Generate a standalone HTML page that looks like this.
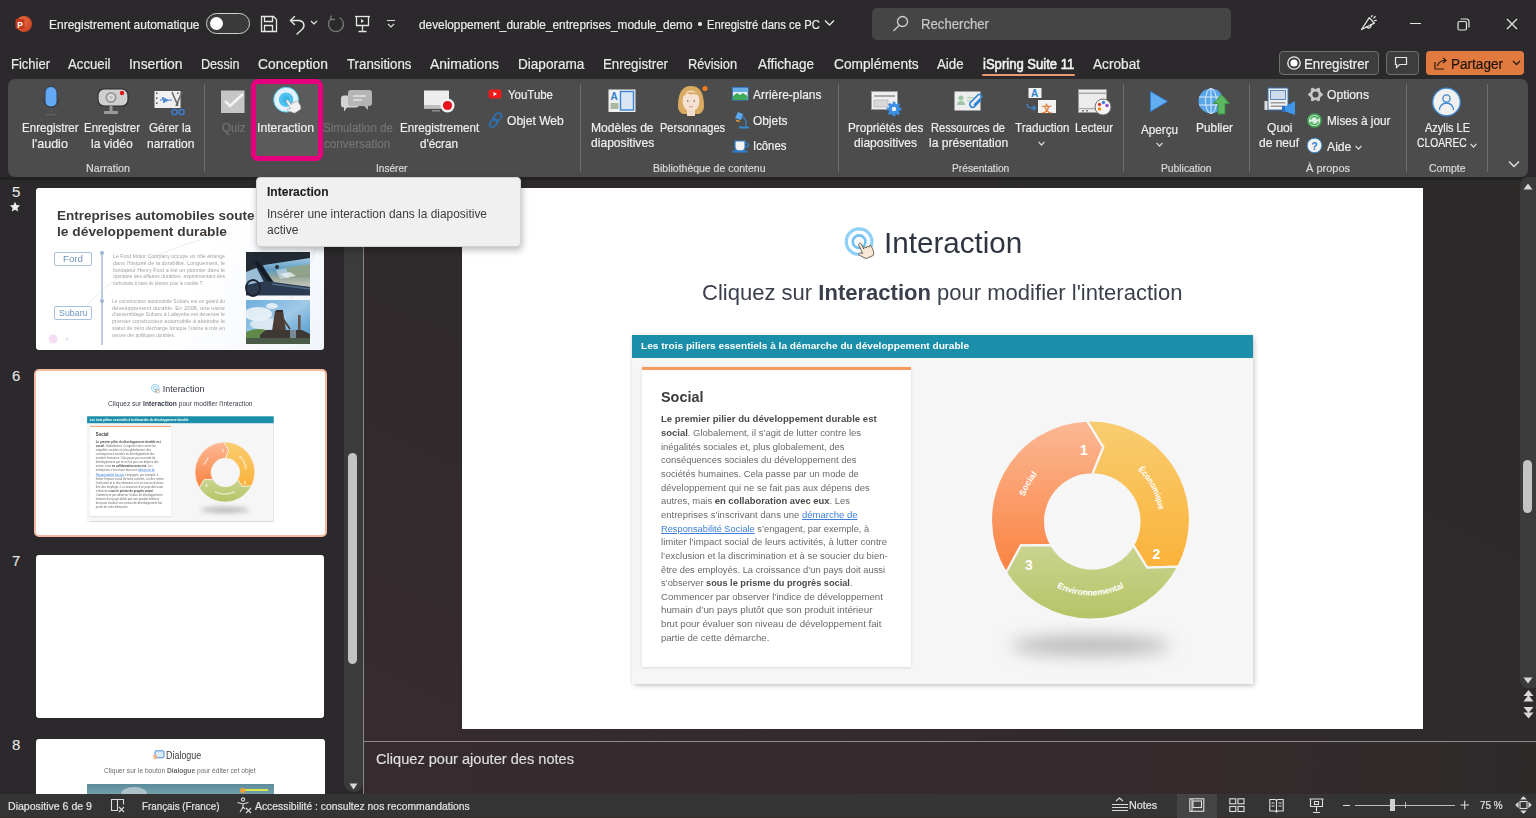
<!DOCTYPE html><html><head><meta charset="utf-8"><style>
*{margin:0;padding:0;box-sizing:border-box}
html,body{width:1536px;height:818px;overflow:hidden}
body{background:#2b292b;position:relative;font-family:'Liberation Sans',sans-serif}
.a{position:absolute}
.tx{position:absolute;white-space:pre;line-height:1;transform-origin:0 0}
svg{position:absolute;overflow:visible}
</style></head><body>
<svg style="left:0;top:0" width="60" height="48"><defs><radialGradient id="pg" cx="0.35" cy="0.35" r="0.8"><stop offset="0" stop-color="#f0704a"/><stop offset="1" stop-color="#c43e1c"/></radialGradient></defs><circle cx="24" cy="24" r="8" fill="url(#pg)"/><rect x="15.5" y="19" width="9" height="10" rx="1" fill="#c4391a"/><text x="17.3" y="27.6" font-size="8.5" font-weight="700" fill="#fff" font-family="Liberation Sans">P</text></svg>
<span class="tx" style="transform:scaleX(0.9215);left:49.00px;top:18.20px;font-size:13px;font-weight:400;color:#ececec;font-family:'Liberation Sans',sans-serif;-webkit-text-stroke:0.2px currentColor;">Enregistrement automatique</span>
<div class="a" style="left:206px;top:13px;width:44px;height:21px;border:1.5px solid #cfcfcf;border-radius:11px;background:#3a3a3a"></div>
<div class="a" style="left:210px;top:17px;width:13px;height:13px;border-radius:50%;background:#fff"></div>
<svg style="left:260px;top:15px" width="18" height="18" fill="none" stroke="#e6e6e6" stroke-width="1.3"><path d="M1.5 1.5h12l3 3v12h-15z"/><path d="M4.5 1.5v5h8v-5"/><path d="M4.5 16.5v-6h8v6"/></svg>
<svg style="left:288px;top:14px" width="20" height="20" fill="none" stroke="#e6e6e6" stroke-width="1.4" stroke-linecap="round"><path d="M3 6.5h8a5 5 0 0 1 3.5 8.5L9 20"/><path d="M6.5 2.5L2.5 6.5l4 4"/></svg>
<svg style="left:310px;top:20px" width="8" height="6" fill="none" stroke="#e6e6e6" stroke-width="1.2"><path d="M1 1l3 3 3-3"/></svg>
<svg style="left:326px;top:14px" width="20" height="20" fill="none" stroke="#777" stroke-width="1.4"><path d="M13.5 3.5A7.5 7.5 0 1 1 5 4.5"/><path d="M5 1.5v4h4"/></svg>
<svg style="left:354px;top:15px" width="18" height="18" fill="none" stroke="#e6e6e6" stroke-width="1.3"><path d="M1 1.5h15"/><path d="M2.5 1.5v9h12v-9"/><path d="M8.5 10.5v5M4.5 16.5h8"/><path d="M7 4v4l3-2z" fill="#e6e6e6" stroke="none"/></svg>
<svg style="left:386px;top:19px" width="10" height="10" fill="none" stroke="#dcdcdc" stroke-width="1.2"><path d="M1 1.5h8M2 5l3 3 3-3"/></svg>
<span class="tx" style="transform:scaleX(0.9097);left:419.00px;top:18.20px;font-size:13px;font-weight:400;color:#ececec;font-family:'Liberation Sans',sans-serif;-webkit-text-stroke:0.2px currentColor;">developpement_durable_entreprises_module_demo</span>
<div class="a" style="left:698.3px;top:22.3px;width:3.4px;height:3.4px;border-radius:50%;background:#e6e6e6"></div>
<span class="tx" style="transform:scaleX(0.8672);left:707.40px;top:18.20px;font-size:13px;font-weight:400;color:#ececec;font-family:'Liberation Sans',sans-serif;-webkit-text-stroke:0.2px currentColor;">Enregistré dans ce PC</span>
<svg style="left:824px;top:19px" width="11" height="8" fill="none" stroke="#e6e6e6" stroke-width="1.3"><path d="M1 1.5l4.5 4.5 4.5-4.5"/></svg>
<div class="a" style="left:872px;top:8px;width:359px;height:32px;background:#454545;border-radius:5px"></div>
<svg style="left:892px;top:15px" width="18" height="18" fill="none" stroke="#cfcfcf" stroke-width="1.3"><circle cx="10.5" cy="6.5" r="5"/><path d="M7 10.5L1.5 16"/></svg>
<span class="tx" style="transform:scaleX(0.9396);left:921.00px;top:16.95px;font-size:14px;font-weight:400;color:#c8c8c8;font-family:'Liberation Sans',sans-serif;-webkit-text-stroke:0.2px currentColor;">Rechercher</span>
<svg style="left:1360px;top:15px" width="19" height="17" fill="none" stroke="#e6e6e6" stroke-width="1.3" stroke-linejoin="round" stroke-linecap="round"><path d="M1.5 14.5L9.3 2.6L14.4 8.2z"/><path d="M6.8 11.6a2.2 2.2 0 0 0 4-1.9"/><path d="M11.6 1.6l.5-1M15.2 1.4l-1.3 1.7M16.3 5.4l-1.6.3"/></svg>
<div class="a" style="left:1410px;top:23px;width:11px;height:1.2px;background:#e6e6e6"></div>
<svg style="left:1457px;top:18px" width="13" height="13" fill="none" stroke="#e6e6e6" stroke-width="1.2"><rect x="1" y="3.5" width="8.5" height="8.5" rx="1.5"/><path d="M3.5 1h6a2.5 2.5 0 0 1 2.5 2.5v6"/></svg>
<svg style="left:1506px;top:18px" width="12" height="12" fill="none" stroke="#e6e6e6" stroke-width="1.3"><path d="M1 1l10 10M11 1L1 11"/></svg>
<span class="tx" style="transform:scaleX(0.9282);left:11.00px;top:57.35px;font-size:14px;font-weight:400;color:#ebebeb;font-family:'Liberation Sans',sans-serif;-webkit-text-stroke:0.2px currentColor;">Fichier</span>
<span class="tx" style="transform:scaleX(0.9415);left:67.50px;top:57.35px;font-size:14px;font-weight:400;color:#ebebeb;font-family:'Liberation Sans',sans-serif;-webkit-text-stroke:0.2px currentColor;">Accueil</span>
<span class="tx" style="transform:scaleX(0.9962);left:128.50px;top:57.35px;font-size:14px;font-weight:400;color:#ebebeb;font-family:'Liberation Sans',sans-serif;-webkit-text-stroke:0.2px currentColor;">Insertion</span>
<span class="tx" style="transform:scaleX(0.8996);left:201.00px;top:57.35px;font-size:14px;font-weight:400;color:#ebebeb;font-family:'Liberation Sans',sans-serif;-webkit-text-stroke:0.2px currentColor;">Dessin</span>
<span class="tx" style="transform:scaleX(0.9883);left:258.00px;top:57.35px;font-size:14px;font-weight:400;color:#ebebeb;font-family:'Liberation Sans',sans-serif;-webkit-text-stroke:0.2px currentColor;">Conception</span>
<span class="tx" style="transform:scaleX(0.9492);left:347.00px;top:57.35px;font-size:14px;font-weight:400;color:#ebebeb;font-family:'Liberation Sans',sans-serif;-webkit-text-stroke:0.2px currentColor;">Transitions</span>
<span class="tx" style="transform:scaleX(0.9962);left:430.00px;top:57.35px;font-size:14px;font-weight:400;color:#ebebeb;font-family:'Liberation Sans',sans-serif;-webkit-text-stroke:0.2px currentColor;">Animations</span>
<span class="tx" style="transform:scaleX(0.9696);left:517.60px;top:57.35px;font-size:14px;font-weight:400;color:#ebebeb;font-family:'Liberation Sans',sans-serif;-webkit-text-stroke:0.2px currentColor;">Diaporama</span>
<span class="tx" style="transform:scaleX(0.9493);left:603.00px;top:57.35px;font-size:14px;font-weight:400;color:#ebebeb;font-family:'Liberation Sans',sans-serif;-webkit-text-stroke:0.2px currentColor;">Enregistrer</span>
<span class="tx" style="transform:scaleX(0.9124);left:688.00px;top:57.35px;font-size:14px;font-weight:400;color:#ebebeb;font-family:'Liberation Sans',sans-serif;-webkit-text-stroke:0.2px currentColor;">Révision</span>
<span class="tx" style="transform:scaleX(0.9634);left:757.70px;top:57.35px;font-size:14px;font-weight:400;color:#ebebeb;font-family:'Liberation Sans',sans-serif;-webkit-text-stroke:0.2px currentColor;">Affichage</span>
<span class="tx" style="transform:scaleX(0.9806);left:833.70px;top:57.35px;font-size:14px;font-weight:400;color:#ebebeb;font-family:'Liberation Sans',sans-serif;-webkit-text-stroke:0.2px currentColor;">Compléments</span>
<span class="tx" style="transform:scaleX(0.9489);left:937.00px;top:57.35px;font-size:14px;font-weight:400;color:#ebebeb;font-family:'Liberation Sans',sans-serif;-webkit-text-stroke:0.2px currentColor;">Aide</span>
<span class="tx" style="transform:scaleX(0.9334);left:982.70px;top:57.35px;font-size:14px;font-weight:400;color:#f4f4f4;font-family:'Liberation Sans',sans-serif;-webkit-text-stroke:0.2px currentColor;-webkit-text-stroke:0.55px currentColor;">iSpring Suite 11</span>
<span class="tx" style="transform:scaleX(0.9741);left:1093.00px;top:57.35px;font-size:14px;font-weight:400;color:#ebebeb;font-family:'Liberation Sans',sans-serif;-webkit-text-stroke:0.2px currentColor;">Acrobat</span>
<div class="a" style="left:982px;top:73.5px;width:93px;height:2.6px;border-radius:1.3px;background:#ee9870"></div>
<div class="a" style="left:1279px;top:51px;width:100px;height:24px;border:1px solid #6f6f6f;border-radius:4px;background:#3d3d3d"></div>
<svg style="left:1286px;top:55px" width="16" height="16"><circle cx="8" cy="8" r="6.2" fill="none" stroke="#eee" stroke-width="1.3"/><circle cx="8" cy="8" r="3.6" fill="#fff"/></svg>
<span class="tx" style="transform:scaleX(0.9493);left:1303.50px;top:56.95px;font-size:14px;font-weight:400;color:#f0f0f0;font-family:'Liberation Sans',sans-serif;-webkit-text-stroke:0.2px currentColor;">Enregistrer</span>
<div class="a" style="left:1386px;top:51px;width:33px;height:24px;border:1px solid #6f6f6f;border-radius:4px;background:#3d3d3d"></div>
<svg style="left:1394px;top:56px" width="16" height="14" fill="none" stroke="#e6e6e6" stroke-width="1.2"><path d="M1.5 1.5h11v7h-7l-3 3v-3h-1z"/></svg>
<div class="a" style="left:1426px;top:51px;width:98px;height:24px;border-radius:4px;background:#e07a3e"></div>
<svg style="left:1433px;top:55px" width="16" height="16" fill="none" stroke="#2a1a10" stroke-width="1.2"><path d="M2 7v7h9"/><path d="M4.5 11c1-4 4-5.5 8-5.5"/><path d="M10 3l3 2.5-3 2.5"/></svg>
<span class="tx" style="transform:scaleX(0.9683);left:1450.50px;top:57.15px;font-size:14px;font-weight:400;color:#1f140c;font-family:'Liberation Sans',sans-serif;-webkit-text-stroke:0.2px currentColor;">Partager</span>
<svg style="left:1512px;top:60px" width="9" height="6" fill="none" stroke="#2a1a10" stroke-width="1.3"><path d="M1 1l3.5 3.5L8 1"/></svg>
<div class="a" style="left:8px;top:79px;width:1520px;height:98px;background:#4c4c4c;border-radius:7px"></div>
<div class="a" style="left:204.0px;top:84px;width:1px;height:88px;background:#6e6e6e"></div>
<div class="a" style="left:580.2px;top:84px;width:1px;height:88px;background:#6e6e6e"></div>
<div class="a" style="left:837.5px;top:84px;width:1px;height:88px;background:#6e6e6e"></div>
<div class="a" style="left:1123.0px;top:84px;width:1px;height:88px;background:#6e6e6e"></div>
<div class="a" style="left:1248.8px;top:84px;width:1px;height:88px;background:#6e6e6e"></div>
<div class="a" style="left:1406.2px;top:84px;width:1px;height:88px;background:#6e6e6e"></div>
<div class="a" style="left:1487.0px;top:84px;width:1px;height:88px;background:#6e6e6e"></div>
<div class="a" style="left:250.5px;top:79.3px;width:72px;height:82px;border:5px solid #e6007e;border-radius:7px;background:#5b5b5b"></div>
<span class="tx" style="transform:scaleX(0.8902);left:21.70px;top:121.00px;font-size:13px;font-weight:400;color:#f0f0f0;font-family:'Liberation Sans',sans-serif;-webkit-text-stroke:0.2px currentColor;">Enregistrer</span>
<span class="tx" style="transform:scaleX(0.9654);left:32.00px;top:136.70px;font-size:13px;font-weight:400;color:#f0f0f0;font-family:'Liberation Sans',sans-serif;-webkit-text-stroke:0.2px currentColor;">l&#x27;audio</span>
<span class="tx" style="transform:scaleX(0.8808);left:84.00px;top:121.00px;font-size:13px;font-weight:400;color:#f0f0f0;font-family:'Liberation Sans',sans-serif;-webkit-text-stroke:0.2px currentColor;">Enregistrer</span>
<span class="tx" style="transform:scaleX(0.9305);left:91.30px;top:136.70px;font-size:13px;font-weight:400;color:#f0f0f0;font-family:'Liberation Sans',sans-serif;-webkit-text-stroke:0.2px currentColor;">la vidéo</span>
<span class="tx" style="transform:scaleX(0.8942);left:149.00px;top:121.00px;font-size:13px;font-weight:400;color:#f0f0f0;font-family:'Liberation Sans',sans-serif;-webkit-text-stroke:0.2px currentColor;">Gérer la</span>
<span class="tx" style="transform:scaleX(0.9218);left:146.70px;top:136.70px;font-size:13px;font-weight:400;color:#f0f0f0;font-family:'Liberation Sans',sans-serif;-webkit-text-stroke:0.2px currentColor;">narration</span>
<span class="tx" style="transform:scaleX(0.9724);left:86.00px;top:163.29px;font-size:11px;font-weight:400;color:#dadada;font-family:'Liberation Sans',sans-serif;-webkit-text-stroke:0.2px currentColor;">Narration</span>
<span class="tx" style="transform:scaleX(0.8790);left:221.50px;top:121.00px;font-size:13px;font-weight:400;color:#747474;font-family:'Liberation Sans',sans-serif;-webkit-text-stroke:0.2px currentColor;">Quiz</span>
<span class="tx" style="transform:scaleX(0.9390);left:257.00px;top:121.00px;font-size:13px;font-weight:400;color:#f0f0f0;font-family:'Liberation Sans',sans-serif;-webkit-text-stroke:0.2px currentColor;">Interaction</span>
<span class="tx" style="transform:scaleX(0.8885);left:323.00px;top:121.00px;font-size:13px;font-weight:400;color:#747474;font-family:'Liberation Sans',sans-serif;-webkit-text-stroke:0.2px currentColor;">Simulation de</span>
<span class="tx" style="transform:scaleX(0.8994);left:323.70px;top:136.70px;font-size:13px;font-weight:400;color:#747474;font-family:'Liberation Sans',sans-serif;-webkit-text-stroke:0.2px currentColor;">conversation</span>
<span class="tx" style="transform:scaleX(0.8984);left:399.80px;top:121.00px;font-size:13px;font-weight:400;color:#f0f0f0;font-family:'Liberation Sans',sans-serif;-webkit-text-stroke:0.2px currentColor;">Enregistrement</span>
<span class="tx" style="transform:scaleX(0.8997);left:420.00px;top:136.70px;font-size:13px;font-weight:400;color:#f0f0f0;font-family:'Liberation Sans',sans-serif;-webkit-text-stroke:0.2px currentColor;">d&#x27;écran</span>
<span class="tx" style="transform:scaleX(0.8807);left:507.80px;top:87.80px;font-size:13px;font-weight:400;color:#f0f0f0;font-family:'Liberation Sans',sans-serif;-webkit-text-stroke:0.2px currentColor;">YouTube</span>
<span class="tx" style="transform:scaleX(0.9283);left:507.00px;top:113.50px;font-size:13px;font-weight:400;color:#f0f0f0;font-family:'Liberation Sans',sans-serif;-webkit-text-stroke:0.2px currentColor;">Objet Web</span>
<span class="tx" style="transform:scaleX(0.9197);left:376.20px;top:163.29px;font-size:11px;font-weight:400;color:#dadada;font-family:'Liberation Sans',sans-serif;-webkit-text-stroke:0.2px currentColor;">Insérer</span>
<span class="tx" style="transform:scaleX(0.9313);left:591.00px;top:120.80px;font-size:13px;font-weight:400;color:#f0f0f0;font-family:'Liberation Sans',sans-serif;-webkit-text-stroke:0.2px currentColor;">Modèles de</span>
<span class="tx" style="transform:scaleX(0.9303);left:590.50px;top:136.40px;font-size:13px;font-weight:400;color:#f0f0f0;font-family:'Liberation Sans',sans-serif;-webkit-text-stroke:0.2px currentColor;">diapositives</span>
<span class="tx" style="transform:scaleX(0.8496);left:659.60px;top:120.80px;font-size:13px;font-weight:400;color:#f0f0f0;font-family:'Liberation Sans',sans-serif;-webkit-text-stroke:0.2px currentColor;">Personnages</span>
<span class="tx" style="transform:scaleX(0.9191);left:752.60px;top:88.20px;font-size:13px;font-weight:400;color:#f0f0f0;font-family:'Liberation Sans',sans-serif;-webkit-text-stroke:0.2px currentColor;">Arrière-plans</span>
<span class="tx" style="transform:scaleX(0.9154);left:752.60px;top:113.50px;font-size:13px;font-weight:400;color:#f0f0f0;font-family:'Liberation Sans',sans-serif;-webkit-text-stroke:0.2px currentColor;">Objets</span>
<span class="tx" style="transform:scaleX(0.8718);left:752.60px;top:139.00px;font-size:13px;font-weight:400;color:#f0f0f0;font-family:'Liberation Sans',sans-serif;-webkit-text-stroke:0.2px currentColor;">Icônes</span>
<span class="tx" style="transform:scaleX(0.9530);left:652.80px;top:163.29px;font-size:11px;font-weight:400;color:#dadada;font-family:'Liberation Sans',sans-serif;-webkit-text-stroke:0.2px currentColor;">Bibliothèque de contenu</span>
<span class="tx" style="transform:scaleX(0.8995);left:848.00px;top:120.70px;font-size:13px;font-weight:400;color:#f0f0f0;font-family:'Liberation Sans',sans-serif;-webkit-text-stroke:0.2px currentColor;">Propriétés des</span>
<span class="tx" style="transform:scaleX(0.9288);left:854.40px;top:136.30px;font-size:13px;font-weight:400;color:#f0f0f0;font-family:'Liberation Sans',sans-serif;-webkit-text-stroke:0.2px currentColor;">diapositives</span>
<span class="tx" style="transform:scaleX(0.8533);left:931.00px;top:120.70px;font-size:13px;font-weight:400;color:#f0f0f0;font-family:'Liberation Sans',sans-serif;-webkit-text-stroke:0.2px currentColor;">Ressources de</span>
<span class="tx" style="transform:scaleX(0.9275);left:928.60px;top:136.30px;font-size:13px;font-weight:400;color:#f0f0f0;font-family:'Liberation Sans',sans-serif;-webkit-text-stroke:0.2px currentColor;">la présentation</span>
<span class="tx" style="transform:scaleX(0.8927);left:1014.60px;top:120.70px;font-size:13px;font-weight:400;color:#f0f0f0;font-family:'Liberation Sans',sans-serif;-webkit-text-stroke:0.2px currentColor;">Traduction</span>
<span class="tx" style="transform:scaleX(0.8761);left:1075.00px;top:120.70px;font-size:13px;font-weight:400;color:#f0f0f0;font-family:'Liberation Sans',sans-serif;-webkit-text-stroke:0.2px currentColor;">Lecteur</span>
<span class="tx" style="transform:scaleX(0.9277);left:952.00px;top:163.29px;font-size:11px;font-weight:400;color:#dadada;font-family:'Liberation Sans',sans-serif;-webkit-text-stroke:0.2px currentColor;">Présentation</span>
<span class="tx" style="transform:scaleX(0.9004);left:1140.50px;top:122.70px;font-size:13px;font-weight:400;color:#f0f0f0;font-family:'Liberation Sans',sans-serif;-webkit-text-stroke:0.2px currentColor;">Aperçu</span>
<span class="tx" style="transform:scaleX(0.9143);left:1196.00px;top:120.70px;font-size:13px;font-weight:400;color:#f0f0f0;font-family:'Liberation Sans',sans-serif;-webkit-text-stroke:0.2px currentColor;">Publier</span>
<span class="tx" style="transform:scaleX(0.9363);left:1161.00px;top:163.29px;font-size:11px;font-weight:400;color:#dadada;font-family:'Liberation Sans',sans-serif;-webkit-text-stroke:0.2px currentColor;">Publication</span>
<span class="tx" style="transform:scaleX(0.9283);left:1266.50px;top:120.70px;font-size:13px;font-weight:400;color:#f0f0f0;font-family:'Liberation Sans',sans-serif;-webkit-text-stroke:0.2px currentColor;">Quoi</span>
<span class="tx" style="transform:scaleX(0.9222);left:1259.00px;top:136.30px;font-size:13px;font-weight:400;color:#f0f0f0;font-family:'Liberation Sans',sans-serif;-webkit-text-stroke:0.2px currentColor;">de neuf</span>
<span class="tx" style="transform:scaleX(0.9372);left:1327.00px;top:88.10px;font-size:13px;font-weight:400;color:#f0f0f0;font-family:'Liberation Sans',sans-serif;-webkit-text-stroke:0.2px currentColor;">Options</span>
<span class="tx" style="transform:scaleX(0.9061);left:1327.00px;top:114.20px;font-size:13px;font-weight:400;color:#f0f0f0;font-family:'Liberation Sans',sans-serif;-webkit-text-stroke:0.2px currentColor;">Mises à jour</span>
<span class="tx" style="transform:scaleX(0.9373);left:1327.00px;top:139.60px;font-size:13px;font-weight:400;color:#f0f0f0;font-family:'Liberation Sans',sans-serif;-webkit-text-stroke:0.2px currentColor;">Aide</span>
<span class="tx" style="transform:scaleX(0.9993);left:1305.50px;top:163.29px;font-size:11px;font-weight:400;color:#dadada;font-family:'Liberation Sans',sans-serif;-webkit-text-stroke:0.2px currentColor;">À propos</span>
<span class="tx" style="transform:scaleX(0.8416);left:1425.00px;top:120.70px;font-size:13px;font-weight:400;color:#f0f0f0;font-family:'Liberation Sans',sans-serif;-webkit-text-stroke:0.2px currentColor;">Azylis LE</span>
<span class="tx" style="transform:scaleX(0.7907);left:1416.70px;top:136.30px;font-size:13px;font-weight:400;color:#f0f0f0;font-family:'Liberation Sans',sans-serif;-webkit-text-stroke:0.2px currentColor;">CLOAREC</span>
<span class="tx" style="transform:scaleX(0.9499);left:1429.00px;top:162.99px;font-size:11px;font-weight:400;color:#dadada;font-family:'Liberation Sans',sans-serif;-webkit-text-stroke:0.2px currentColor;">Compte</span>
<svg style="left:1038.0px;top:140.5px" width="7" height="5" fill="none" stroke="#e0e0e0" stroke-width="1.2"><path d="M0.6 0.8L3.5 4.2L6.4 0.8"/></svg>
<svg style="left:1155.5px;top:142.0px" width="7" height="5" fill="none" stroke="#e0e0e0" stroke-width="1.2"><path d="M0.6 0.8L3.5 4.2L6.4 0.8"/></svg>
<svg style="left:1355.0px;top:144.5px" width="7" height="5" fill="none" stroke="#e0e0e0" stroke-width="1.2"><path d="M0.6 0.8L3.5 4.2L6.4 0.8"/></svg>
<svg style="left:1469.5px;top:143.0px" width="7" height="5" fill="none" stroke="#e0e0e0" stroke-width="1.2"><path d="M0.6 0.8L3.5 4.2L6.4 0.8"/></svg>
<svg style="left:1508px;top:160px" width="12" height="8" fill="none" stroke="#e6e6e6" stroke-width="1.3"><path d="M1 1.5l5 5 5-5"/></svg>
<svg style="left:40px;top:84px" width="22" height="34"><rect x="5" y="2.5" width="12" height="21" rx="6" fill="#62a8f2" stroke="#2c3e55" stroke-width="1"/><path d="M3 15a8 8 0 0 0 16 0" fill="none" stroke="#3a3a3a" stroke-width="1"/><rect x="10.5" y="24" width="1.2" height="6" fill="#5a5a5a"/><rect x="6" y="30" width="10" height="1.5" fill="#5e5e5e"/></svg>
<svg style="left:96px;top:87px" width="34" height="30"><rect x="2" y="2" width="30" height="17" rx="6" fill="#cfcfcf" stroke="#2d2d2d" stroke-width="1.2"/><circle cx="15" cy="10.5" r="5.5" fill="#9a9a9a"/><circle cx="15" cy="10.5" r="3.5" fill="#e6e6e6"/><circle cx="15" cy="10.5" r="2" fill="#bdbdbd"/><circle cx="26" cy="6" r="2.2" fill="#e51515"/><rect x="13.5" y="19" width="3" height="5" fill="#9a9a9a"/><rect x="8" y="24" width="14" height="3" rx="1" fill="#9a9a9a"/></svg>
<svg style="left:153px;top:89px" width="38" height="30"><rect x="1.5" y="2" width="26" height="17" fill="#efefef"/><g fill="#555"><rect x="3" y="3.5" width="1.5" height="1.5"/><rect x="3" y="8.5" width="1.5" height="1.5"/><rect x="3" y="13.5" width="1.5" height="1.5"/><rect x="24" y="3.5" width="1.5" height="1.5"/><rect x="24" y="13.5" width="1.5" height="1.5"/></g><path d="M7 11h2l1-3 1 6 1-5 1 4 1-3 1 2 1-1h3" fill="none" stroke="#3b7fd0" stroke-width="1"/><path d="M19 3l6 14M29 3l-6 14" stroke="#6b6b6b" stroke-width="1.6"/><circle cx="21.5" cy="23" r="2.6" fill="none" stroke="#3d7cc9" stroke-width="1.5"/><circle cx="28.5" cy="23" r="2.6" fill="none" stroke="#3d7cc9" stroke-width="1.5"/></svg>
<svg style="left:220px;top:89px" width="28" height="26"><rect x="1" y="1.5" width="23.5" height="22.5" fill="#c6c6c6"/><path d="M5 12l5 5 13-12" fill="none" stroke="#f4f4f4" stroke-width="2.6"/></svg>
<svg style="left:272px;top:85px" width="32" height="34"><circle cx="14.1" cy="14.7" r="12.4" fill="#e4f2fb" stroke="#4fd0ef" stroke-width="1"/><circle cx="14.1" cy="14.7" r="7.2" fill="#4cc3ef"/><circle cx="14.1" cy="14.7" r="3.5" fill="#3cb5e6"/><path transform="translate(14.8 15.2) rotate(-33) scale(0.78)" d="M-1.7 1.5a1.7 1.7 0 0 1 3.4 0V8a1.6 1.6 0 0 1 3.2 .2a1.6 1.6 0 0 1 3.2 .4a1.5 1.5 0 0 1 3 .6V14q0 3.5-2.5 5.5H-.5L-6 12.5a1.5 1.5 0 0 1 2.2-2L-1.7 12z" fill="#f2f2f2" stroke="#8a8a8a" stroke-width=".6"/></svg>
<svg style="left:340px;top:89px" width="34" height="26"><path d="M1 9.5a3 3 0 0 1 3-3h12a3 3 0 0 1 3 3v6a3 3 0 0 1-3 3H7l-3 4v-4a3 3 0 0 1-3-3z" fill="#d3d3d3"/><path d="M8 4a3 3 0 0 1 3-3h18a3 3 0 0 1 3 3v10a3 3 0 0 1-3 3h-1v4l-4-4H11a3 3 0 0 1-3-3z" fill="#b5b5b5"/><rect x="13" y="6" width="13" height="2" fill="#d8d8d8"/><rect x="13" y="10" width="9" height="2" fill="#d8d8d8"/></svg>
<svg style="left:423px;top:89px" width="34" height="26"><rect x="1" y="1.5" width="25" height="18" fill="#ededed"/><rect x="1" y="16" width="25" height="3.5" fill="#bfbfbf"/><rect x="9" y="21" width="8" height="1.6" fill="#8a8a8a"/><circle cx="24.5" cy="16.5" r="7" fill="#f4f4f4"/><circle cx="24.5" cy="16.5" r="4.6" fill="#e8141c"/></svg>
<svg style="left:488px;top:89px" width="14" height="10"><rect x="0.5" y="0.5" width="13" height="9" rx="2.2" fill="#ef1b1b"/><path d="M5.5 3l3.5 2-3.5 2z" fill="#fff"/></svg>
<svg style="left:487px;top:111px" width="17" height="18" fill="none" stroke="#2f72b3" stroke-width="1.7"><rect x="7.5" y="1.5" width="6" height="9" rx="3" transform="rotate(40 10.5 6)"/><rect x="3.5" y="7.5" width="6" height="9" rx="3" transform="rotate(40 6.5 12)"/></svg>
<svg style="left:608px;top:89px" width="29" height="24"><rect x="0.5" y="0.5" width="27" height="22.5" fill="#f0f0f0"/><text x="2.5" y="11" font-size="10" font-weight="700" fill="#2f7fd1" font-family="Liberation Sans">A</text><rect x="2.5" y="14" width="8" height="6" fill="#a9b9a3"/><rect x="12.5" y="2.5" width="13" height="18.5" fill="#dbe6f5" stroke="#3b84d6" stroke-width="1.4"/></svg>
<svg style="left:675px;top:84px" width="36" height="36"><path d="M3 22c0-13 4-20 13-20s13 7 13 20c0 4-2 7-5 8H8c-3-1-5-4-5-8z" fill="#d8ab62"/><ellipse cx="16" cy="17" rx="8.5" ry="10.5" fill="#f6e2d2"/><path d="M7 12c3-4 12-6 17-1-4-1-9 0-12-2-1 2-3 3-5 3z" fill="#d8ab62"/><rect x="12" y="26" width="8" height="6" fill="#f3dccb"/><circle cx="12.8" cy="17" r=".8" fill="#555"/><circle cx="19.2" cy="17" r=".8" fill="#555"/><path d="M14 22.5q2 1 4 0" stroke="#c77" stroke-width=".8" fill="none"/><circle cx="30" cy="4.5" r="2.6" fill="#f07a1e"/></svg>
<svg style="left:732px;top:87px" width="17" height="14"><rect x="0.5" y="0.5" width="15.5" height="12.5" fill="#e8f0f6" stroke="#3a7fc9" stroke-width="1"/><rect x="1" y="1" width="14.5" height="4" fill="#66aee6"/><path d="M1 9l4-3 3 2 3-2 4.5 3v4H1z" fill="#3faa5a"/></svg>
<svg style="left:733px;top:111px" width="17" height="18"><path d="M5 1l5 2-2 6-6-2z" fill="#5aa9ef"/><path d="M2.5 8.5a3 3 0 0 0 5 1.5" fill="#f39c3b"/><path d="M9 4l4 6v6" fill="none" stroke="#3a86d0" stroke-width="1.2"/><rect x="6" y="15.5" width="10" height="2" fill="#3a86d0"/></svg>
<svg style="left:732px;top:139px" width="17" height="14"><path d="M3 2h10v6a4 4 0 0 1-4 4H7a4 4 0 0 1-4-4z" fill="#f2f2f2" stroke="#2f7fd1" stroke-width="1.2"/><path d="M13 4h1.5a2 2 0 0 1 0 4H13" fill="none" stroke="#2f7fd1" stroke-width="1.2"/><rect x="0.5" y="11.5" width="15" height="2" fill="#2f7fd1"/></svg>
<svg style="left:871px;top:91px" width="32" height="26"><rect x="0.5" y="0.5" width="26" height="18" fill="#efefef" stroke="#9a9a9a" stroke-width="1"/><rect x="3" y="4" width="21" height="2" fill="#a8a8a8"/><rect x="3" y="9" width="14" height="7" fill="#d8d8d8" stroke="#aaa" stroke-width=".6"/><g transform="translate(23 18)"><circle r="5.5" fill="#3d8fe6"/><g fill="#3d8fe6"><rect x="-1.4" y="-7.3" width="2.8" height="14.6"/><rect x="-1.4" y="-7.3" width="2.8" height="14.6" transform="rotate(45)"/><rect x="-1.4" y="-7.3" width="2.8" height="14.6" transform="rotate(90)"/><rect x="-1.4" y="-7.3" width="2.8" height="14.6" transform="rotate(135)"/></g><circle r="2.2" fill="#efefef"/></g></svg>
<svg style="left:954px;top:91px" width="32" height="26"><rect x="0.5" y="0.5" width="26" height="19" fill="#ededed"/><circle cx="7" cy="7" r="2.5" fill="#9fc7a5"/><path d="M3 14a4 4 0 0 1 8 0z" fill="#9fc7a5"/><rect x="13" y="6" width="8" height="1.5" fill="#bcd6c0"/><rect x="13" y="9" width="6" height="1.5" fill="#bcd6c0"/><path d="M27 9l-7 7a3 3 0 0 1-4-4l8-8a2 2 0 0 1 3 3l-7 7" fill="none" stroke="#2f83d6" stroke-width="1.6"/></svg>
<svg style="left:1026px;top:87px" width="32" height="28"><rect x="2.5" y="1" width="13" height="10" fill="#f2f2f2"/><text x="5" y="10" font-size="10" font-weight="700" fill="#2f7fd1" font-family="Liberation Sans">A</text><rect x="12" y="13" width="18" height="13" fill="#f2f2f2"/><text x="16" y="24.5" font-size="10" font-weight="700" fill="#e0782e" font-family="Liberation Sans">文</text><path d="M1 17c0 3 2 4 5 4h3M7 18.5l2.5 2.5L7 23.5" fill="none" stroke="#3a86d0" stroke-width="1.3"/></svg>
<svg style="left:1078px;top:89px" width="34" height="30"><rect x="0.5" y="0.5" width="28" height="23" fill="#ececec" stroke="#9a9a9a" stroke-width=".8"/><rect x="0.5" y="3.5" width="28" height="1.5" fill="#aaa"/><rect x="0.5" y="19" width="28" height="1.2" fill="#aaa"/><rect x="4" y="21" width="2" height="1.5" fill="#777"/><rect x="8" y="21" width="2" height="1.5" fill="#777"/><circle cx="25" cy="18" r="8" fill="#f4f4f4" stroke="#6d6d6d" stroke-width="1"/><circle cx="21.5" cy="15.5" r="1.7" fill="#e83a3a"/><circle cx="25.5" cy="13.5" r="1.7" fill="#3b82e0"/><circle cx="29" cy="16.5" r="1.7" fill="#8e4bd0"/><circle cx="21.5" cy="20" r="1.7" fill="#f08a20"/></svg>
<svg style="left:1149px;top:90px" width="20" height="24"><path d="M1.5 1.5l17 10L1.5 21.5z" fill="#62aef2" stroke="#2f7fd0" stroke-width="1"/></svg>
<svg style="left:1198px;top:87px" width="32" height="30"><circle cx="13" cy="14" r="12.5" fill="#5aa6ea"/><g fill="none" stroke="#d9ecfa" stroke-width="1"><ellipse cx="13" cy="14" rx="5.5" ry="12.5"/><path d="M1 10h24M1 18h24M13 1.5v25"/></g><path d="M15.5 16.5l8-9 8 9h-4.5v10.5h-7V16.5z" fill="#5cb860" stroke="#3d8c42" stroke-width="1"/></svg>
<svg style="left:1264px;top:87px" width="34" height="30"><rect x="4" y="1" width="20" height="22" fill="#f2f2f2" stroke="#3a6fb0" stroke-width="1"/><rect x="6.5" y="3.5" width="15" height="9" fill="#cfdcec" stroke="#3a6fb0" stroke-width=".8"/><rect x="6.5" y="15" width="15" height="1.5" fill="#9a9a9a"/><rect x="6.5" y="18.5" width="15" height="1.5" fill="#9a9a9a"/><rect x="0.5" y="14" width="3" height="9" fill="#dedede"/><path d="M20 20l11-6v14l-11-4z" fill="#3f95ea"/><rect x="18" y="19" width="3" height="6" fill="#2a70c0"/></svg>
<svg style="left:1306.5px;top:85.8px" width="18" height="18"><polygon points="15.90,8.50 12.83,11.00 12.20,14.91 8.50,13.50 4.80,14.91 4.17,11.00 1.10,8.50 4.17,6.00 4.80,2.09 8.50,3.50 12.20,2.09 12.83,6.00" fill="#c8c8c8" stroke="#c8c8c8" stroke-width="1" stroke-linejoin="round"/><circle cx="8.5" cy="8.5" r="3.1" fill="#4c4c4c"/></svg>
<svg style="left:1306px;top:112px" width="18" height="18"><circle cx="8.5" cy="8.5" r="7.3" fill="#43a856"/><circle cx="8.5" cy="8.5" r="5.6" fill="#dff0e2"/><path d="M4.6 7.6a4 4 0 0 1 7.2-1.4M12.4 9.4a4 4 0 0 1-7.2 1.4" fill="none" stroke="#43a856" stroke-width="1.4"/><path d="M12.6 4.2v3h-3z M4.4 12.8v-3h3z" fill="#43a856"/></svg>
<svg style="left:1306px;top:137px" width="18" height="18"><circle cx="8.5" cy="8.5" r="7.3" fill="#f2f2f2" stroke="#3a86d0" stroke-width="1"/><text x="5.3" y="12.7" font-size="10.5" font-weight="700" fill="#2f7fd1" font-family="Liberation Sans">?</text></svg>
<svg style="left:1431px;top:87px" width="32" height="32"><circle cx="15.5" cy="15" r="13.8" fill="#f0f0f0" stroke="#3a86d0" stroke-width="1.3"/><circle cx="15.5" cy="11.5" r="3.6" fill="none" stroke="#3a86d0" stroke-width="1.3"/><path d="M8.5 23a7 7 0 0 1 14 0" fill="none" stroke="#3a86d0" stroke-width="1.3"/></svg>
<div class="a" style="left:364px;top:177px;width:1172px;height:564px;background:linear-gradient(to bottom left,#2d2a2a 0%,#2f2a2c 55%,#372b30 100%)"></div>
<div class="a" style="left:364px;top:741px;width:1172px;height:53px;background:linear-gradient(90deg,#362b2e 0%,#342a2c 72%,#2e2a2a 100%)"></div>
<div class="a" style="left:364px;top:740.5px;width:1172px;height:1px;background:#8f8a8b"></div>
<div class="a" style="left:363px;top:177px;width:1px;height:617px;background:#8a8788"></div>
<span class="tx" style="transform:scaleX(0.9731);left:375.50px;top:750.70px;font-size:15px;font-weight:400;color:#dedede;font-family:'Liberation Sans',sans-serif;-webkit-text-stroke:0.2px currentColor;">Cliquez pour ajouter des notes</span>
<div class="a" style="left:0;top:177px;width:1536px;height:2.5px;background:#232223"></div>
<div class="a" style="left:462px;top:188px;width:961px;height:541px;background:#fff;overflow:hidden"><svg style="left:380px;top:36px" width="40" height="40"><circle cx="17.1" cy="17.7" r="12.8" fill="none" stroke="#8fd0f7" stroke-width="3.2"/><circle cx="17.1" cy="17.7" r="6.3" fill="none" stroke="#71c1f3" stroke-width="2.6"/><path transform="translate(17.6 19.5) rotate(-25) scale(0.85)" d="M-1.7 1.5a1.7 1.7 0 0 1 3.4 0V8a1.6 1.6 0 0 1 3.2 .2a1.6 1.6 0 0 1 3.2 .4a1.5 1.5 0 0 1 3 .6V14q0 3.5-2.5 5.5H-.5L-6 12.5a1.5 1.5 0 0 1 2.2-2L-1.7 12z" fill="#f7e8d6" stroke="#4a3a2c" stroke-width=".8"/></svg>
<span class="tx" style="transform:scaleX(1.0213);left:421.60px;top:41.45px;font-size:29px;font-weight:400;color:#2f3441;font-family:'Liberation Sans',sans-serif;">Interaction</span>
<span class="tx" style="transform:scaleX(0.9880);left:240.00px;top:94.12px;font-size:22.3px;font-weight:400;color:#3a3f4b;font-family:'Liberation Sans',sans-serif;">Cliquez sur <b>Interaction</b> pour modifier l&#39;interaction</span>
<div class="a" style="left:170px;top:147px;width:621px;height:349.3px;background:#f6f6f6;box-shadow:1.5px 2px 5px rgba(0,0,0,0.2),-1px 0 3px rgba(0,0,0,0.08)"></div>
<div class="a" style="left:170px;top:147px;width:621px;height:22.5px;background:#1b8fa9"></div>
<span class="tx" style="transform:scaleX(1.1229);left:179.20px;top:154.08px;font-size:9px;font-weight:700;color:#ffffff;font-family:'Liberation Sans',sans-serif;">Les trois piliers essentiels à la démarche du développement durable</span>
<div class="a" style="left:180px;top:178.6px;width:269px;height:300px;background:#fff;box-shadow:0 1px 3px rgba(0,0,0,0.12)"></div>
<div class="a" style="left:180px;top:178.6px;width:269px;height:3.2px;background:#f79b5d"></div>
<span class="tx" style="transform:scaleX(0.9595);left:199.20px;top:200.90px;font-size:15px;font-weight:700;color:#3b3b3b;font-family:'Liberation Sans',sans-serif;">Social</span>
<span class="tx" style="transform:scaleX(0.9990);left:199.00px;top:226.47px;font-size:9.6px;font-weight:400;color:#6a6a6a;font-family:'Liberation Sans',sans-serif;"><b style="color:#4a4a4a">Le premier pilier du développement durable est</b></span>
<span class="tx" style="transform:scaleX(0.9848);left:199.00px;top:240.11px;font-size:9.6px;font-weight:400;color:#6a6a6a;font-family:'Liberation Sans',sans-serif;"><b style="color:#4a4a4a">social</b>. Globalement, il s’agit de lutter contre les</span>
<span class="tx" style="transform:scaleX(0.9802);left:199.00px;top:253.75px;font-size:9.6px;font-weight:400;color:#6a6a6a;font-family:'Liberation Sans',sans-serif;">inégalités sociales et, plus globalement, des</span>
<span class="tx" style="transform:scaleX(0.9821);left:199.00px;top:267.39px;font-size:9.6px;font-weight:400;color:#6a6a6a;font-family:'Liberation Sans',sans-serif;">conséquences sociales du développement des</span>
<span class="tx" style="transform:scaleX(0.9760);left:199.00px;top:281.03px;font-size:9.6px;font-weight:400;color:#6a6a6a;font-family:'Liberation Sans',sans-serif;">sociétés humaines. Cela passe par un mode de</span>
<span class="tx" style="transform:scaleX(0.9881);left:199.00px;top:294.67px;font-size:9.6px;font-weight:400;color:#6a6a6a;font-family:'Liberation Sans',sans-serif;">développement qui ne se fait pas aux dépens des</span>
<span class="tx" style="transform:scaleX(0.9785);left:199.00px;top:308.31px;font-size:9.6px;font-weight:400;color:#6a6a6a;font-family:'Liberation Sans',sans-serif;">autres, mais <b style="color:#4a4a4a">en collaboration avec eux</b>. Les</span>
<span class="tx" style="transform:scaleX(0.9905);left:199.00px;top:321.95px;font-size:9.6px;font-weight:400;color:#6a6a6a;font-family:'Liberation Sans',sans-serif;">entreprises s’inscrivant dans une <span style="color:#3d7fd8;text-decoration:underline">démarche de</span></span>
<span class="tx" style="transform:scaleX(0.9658);left:199.00px;top:335.59px;font-size:9.6px;font-weight:400;color:#6a6a6a;font-family:'Liberation Sans',sans-serif;"><span style="color:#3d7fd8;text-decoration:underline">Responsabilité Sociale</span> s’engagent, par exemple, à</span>
<span class="tx" style="transform:scaleX(1.0001);left:199.00px;top:349.23px;font-size:9.6px;font-weight:400;color:#6a6a6a;font-family:'Liberation Sans',sans-serif;">limiter l’impact social de leurs activités, à lutter contre</span>
<span class="tx" style="transform:scaleX(0.9910);left:199.00px;top:362.87px;font-size:9.6px;font-weight:400;color:#6a6a6a;font-family:'Liberation Sans',sans-serif;">l’exclusion et la discrimination et à se soucier du bien-</span>
<span class="tx" style="transform:scaleX(0.9750);left:199.00px;top:376.51px;font-size:9.6px;font-weight:400;color:#6a6a6a;font-family:'Liberation Sans',sans-serif;">être des employés. La croissance d’un pays doit aussi</span>
<span class="tx" style="transform:scaleX(0.9603);left:199.00px;top:390.15px;font-size:9.6px;font-weight:400;color:#6a6a6a;font-family:'Liberation Sans',sans-serif;">s’observer <b style="color:#4a4a4a">sous le prisme du progrès social</b>.</span>
<span class="tx" style="transform:scaleX(0.9974);left:199.00px;top:403.79px;font-size:9.6px;font-weight:400;color:#6a6a6a;font-family:'Liberation Sans',sans-serif;">Commencer par observer l’indice de développement</span>
<span class="tx" style="transform:scaleX(1.0189);left:199.00px;top:417.43px;font-size:9.6px;font-weight:400;color:#6a6a6a;font-family:'Liberation Sans',sans-serif;">humain d’un pays plutôt que son produit intérieur</span>
<span class="tx" style="transform:scaleX(1.0079);left:199.00px;top:431.07px;font-size:9.6px;font-weight:400;color:#6a6a6a;font-family:'Liberation Sans',sans-serif;">brut pour évaluer son niveau de développement fait</span>
<span class="tx" style="transform:scaleX(0.9954);left:199.00px;top:444.71px;font-size:9.6px;font-weight:400;color:#6a6a6a;font-family:'Liberation Sans',sans-serif;">partie de cette démarche.</span>
<svg style="left:0;top:0" width="961" height="541"><defs><linearGradient id="gs" x1="0" y1="0" x2="0" y2="1"><stop offset="0" stop-color="#fbb894"/><stop offset="1" stop-color="#fb8241"/></linearGradient><linearGradient id="ge" x1="0" y1="0" x2="0" y2="1"><stop offset="0" stop-color="#f8cd70"/><stop offset="1" stop-color="#fbb23a"/></linearGradient><linearGradient id="gv" x1="0" y1="0" x2="0" y2="1"><stop offset="0" stop-color="#c9d48f"/><stop offset="1" stop-color="#b6c466"/></linearGradient><filter id="bl" x="-100%" y="-500%" width="300%" height="1100%"><feGaussianBlur stdDeviation="8.5"/></filter></defs><ellipse cx="628.5" cy="457.5" rx="80" ry="9.5" fill="#b6b6b6" filter="url(#bl)"/><path d="M544.12 384.73 A99.5 99.5 0 0 1 625.03 232.56 L641.35 259.12 L630.30 286.30 A47.2 47.2 0 0 0 589.42 357.10 L558.96 357.31 Z" fill="url(#gs)" stroke="#f6f6f6" stroke-width="2.2" stroke-linejoin="miter"/><path d="M625.03 232.56 A99.5 99.5 0 0 1 716.35 378.71 L685.19 379.57 L671.18 357.10 A47.2 47.2 0 0 0 630.30 286.30 L641.35 259.12 Z" fill="url(#ge)" stroke="#f6f6f6" stroke-width="2.2"/><path d="M716.35 378.71 A99.5 99.5 0 0 1 544.12 384.73 L558.96 357.31 L589.42 357.10 A47.2 47.2 0 0 0 671.18 357.10 L685.19 379.57 Z" fill="url(#gv)" stroke="#f6f6f6" stroke-width="2.2"/><text x="618" y="267" font-size="14" font-weight="700" fill="#fff" font-family="Liberation Sans">1</text><text x="690.5" y="370.5" font-size="14" font-weight="700" fill="#fff" font-family="Liberation Sans">2</text><text x="563" y="381.5" font-size="14" font-weight="700" fill="#fff" font-family="Liberation Sans">3</text><path id="pe" d="M652.10 267.16 A69 69 0 0 1 695.15 349.86" fill="none"/><path id="ps" d="M560.89 350.12 A70 70 0 0 1 610.38 264.39" fill="none"/><path id="pv" d="M560.07 363.91 A75.5 75.5 0 0 0 696.93 363.91" fill="none"/><text font-size="8.6" font-weight="700" fill="#fff" font-family="Liberation Sans"><textPath href="#pe" startOffset="50%" text-anchor="middle" textLength="46" lengthAdjust="spacingAndGlyphs">Économique</textPath></text><text font-size="8.6" font-weight="700" fill="#fff" font-family="Liberation Sans"><textPath href="#ps" startOffset="50%" text-anchor="middle" textLength="26" lengthAdjust="spacingAndGlyphs">Social</textPath></text><text font-size="8.6" font-weight="700" fill="#fff" font-family="Liberation Sans"><textPath href="#pv" startOffset="50%" text-anchor="middle" textLength="70" lengthAdjust="spacingAndGlyphs">Environnemental</textPath></text></svg></div>
<div class="a" style="left:1519.5px;top:176.6px;width:16.5px;height:511px;background:#3b3b3b;border-radius:8px 0 0 8px"></div>
<svg style="left:1523px;top:182.5px" width="10" height="7"><path d="M5 0.5L9.5 6.5H0.5z" fill="#d8d8d8"/></svg>
<div class="a" style="left:1523px;top:459.8px;width:9px;height:53px;background:#c4c4c4;border-radius:4.5px"></div>
<svg style="left:1523px;top:677px" width="10" height="7"><path d="M0.5 0.5H9.5L5 6.5z" fill="#d8d8d8"/></svg>
<svg style="left:1522.5px;top:690px" width="11" height="12"><path d="M5.5 0L10.5 6H0.5z M5.5 5L10.5 11.5H0.5z" fill="#d8d8d8"/></svg>
<svg style="left:1522.5px;top:707px" width="11" height="12"><path d="M0.5 0H10.5L5.5 6z M0.5 5.5H10.5L5.5 11.5z" fill="#d8d8d8"/></svg>
<div class="a" style="left:344px;top:177px;width:18.7px;height:615px;background:#3b3b3b;border-radius:0 0 9px 9px"></div>
<div class="a" style="left:348px;top:452.8px;width:9px;height:211.6px;background:#c3c3c3;border-radius:4.5px"></div>
<svg style="left:348.5px;top:782.5px" width="9" height="7"><path d="M0.5 0.5H8.5L4.5 6.5z" fill="#d8d8d8"/></svg>
<span class="tx" style="left:12.00px;top:184.30px;font-size:15px;font-weight:400;color:#e6e6e6;font-family:'Liberation Sans',sans-serif;-webkit-text-stroke:0.2px currentColor;-webkit-text-stroke:0.1px currentColor;">5</span>
<svg style="left:9px;top:201px" width="12" height="12"><path d="M6 0.8l1.5 3.3 3.6.4-2.7 2.4.8 3.6L6 8.7 2.8 10.5l.8-3.6L.9 4.5l3.6-.4z" fill="#ececec"/></svg>
<span class="tx" style="left:12.00px;top:368.30px;font-size:15px;font-weight:400;color:#e6e6e6;font-family:'Liberation Sans',sans-serif;-webkit-text-stroke:0.2px currentColor;-webkit-text-stroke:0.1px currentColor;">6</span>
<span class="tx" style="left:12.00px;top:552.80px;font-size:15px;font-weight:400;color:#e6e6e6;font-family:'Liberation Sans',sans-serif;-webkit-text-stroke:0.2px currentColor;-webkit-text-stroke:0.1px currentColor;">7</span>
<span class="tx" style="left:12.00px;top:737.30px;font-size:15px;font-weight:400;color:#e6e6e6;font-family:'Liberation Sans',sans-serif;-webkit-text-stroke:0.2px currentColor;-webkit-text-stroke:0.1px currentColor;">8</span>
<div class="a" style="left:36px;top:187.5px;width:288px;height:162.3px;background:linear-gradient(120deg,#ffffff 55%,#f1f5fb);border-radius:3px;overflow:hidden"><svg style="left:0;top:0" width="288" height="162"><path d="M195 45c-60 10-120 40-150 80" fill="none" stroke="#dde8f2" stroke-width=".8"/><path d="M230 150c20-30 40-60 50-90" fill="none" stroke="#e3ebf3" stroke-width=".8"/><circle cx="17" cy="151" r="4.5" fill="#f4dcf4"/><circle cx="31" cy="151" r="1.6" fill="#dde8f5"/></svg></div>
<span class="tx" style="transform:scaleX(1.0400);left:57.10px;top:209.00px;font-size:13px;font-weight:700;color:#3e3a3a;font-family:'Liberation Sans',sans-serif;-webkit-text-stroke:0.2px currentColor;-webkit-text-stroke:0;">Entreprises automobiles soute</span>
<span class="tx" style="transform:scaleX(1.0600);left:57.00px;top:224.60px;font-size:13px;font-weight:700;color:#3e3a3a;font-family:'Liberation Sans',sans-serif;-webkit-text-stroke:0.2px currentColor;-webkit-text-stroke:0;">le développement durable</span>
<div class="a" style="left:54.4px;top:252px;width:38px;height:14px;border:1px solid #a9c1dc;border-radius:2px;background:#fff"></div>
<div class="a" style="left:54.4px;top:306.4px;width:38px;height:14px;border:1px solid #a9c1dc;border-radius:2px;background:#fff"></div>
<span class="tx" style="transform:scaleX(1.0802);left:63.00px;top:254.88px;font-size:9px;font-weight:400;color:#6f93bf;font-family:'Liberation Sans',sans-serif;-webkit-text-stroke:0.2px currentColor;-webkit-text-stroke:0;">Ford</span>
<span class="tx" style="transform:scaleX(0.9817);left:58.50px;top:309.18px;font-size:9px;font-weight:400;color:#6f93bf;font-family:'Liberation Sans',sans-serif;-webkit-text-stroke:0.2px currentColor;-webkit-text-stroke:0;">Subaru</span>
<div class="a" style="left:101px;top:252px;width:1.8px;height:93px;background:#bdd0e3"></div>
<div class="a" style="left:100px;top:251px;width:4px;height:4px;border-radius:50%;background:#9db6d0"></div>
<div class="a" style="left:100px;top:298.7px;width:4px;height:4px;border-radius:50%;background:#9db6d0"></div>
<span class="tx" style="transform:scaleX(1.0493);left:113.00px;top:253.77px;font-size:5px;font-weight:400;color:#a3a3a3;font-family:'Liberation Sans',sans-serif;-webkit-text-stroke:0.2px currentColor;-webkit-text-stroke:0;filter:blur(0.25px);">Le Ford Motor Company occupe un rôle étrange</span>
<span class="tx" style="transform:scaleX(1.1026);left:113.00px;top:260.67px;font-size:5px;font-weight:400;color:#a3a3a3;font-family:'Liberation Sans',sans-serif;-webkit-text-stroke:0.2px currentColor;-webkit-text-stroke:0;filter:blur(0.25px);">dans l&#x27;histoire de la durabilité. Longuement, le</span>
<span class="tx" style="transform:scaleX(1.0802);left:113.00px;top:267.57px;font-size:5px;font-weight:400;color:#a3a3a3;font-family:'Liberation Sans',sans-serif;-webkit-text-stroke:0.2px currentColor;-webkit-text-stroke:0;filter:blur(0.25px);">fondateur Henry Ford a été un pionnier dans le</span>
<span class="tx" style="transform:scaleX(1.0107);left:113.00px;top:274.47px;font-size:5px;font-weight:400;color:#a3a3a3;font-family:'Liberation Sans',sans-serif;-webkit-text-stroke:0.2px currentColor;-webkit-text-stroke:0;filter:blur(0.25px);">domaine des affaires durables, expérimentant des</span>
<span class="tx" style="transform:scaleX(0.8642);left:113.00px;top:281.37px;font-size:5px;font-weight:400;color:#a3a3a3;font-family:'Liberation Sans',sans-serif;-webkit-text-stroke:0.2px currentColor;-webkit-text-stroke:0;filter:blur(0.25px);">carburants à base de plantes pour le modèle T.</span>
<span class="tx" style="transform:scaleX(0.9940);left:112.00px;top:298.77px;font-size:5px;font-weight:400;color:#a3a3a3;font-family:'Liberation Sans',sans-serif;-webkit-text-stroke:0.2px currentColor;-webkit-text-stroke:0;filter:blur(0.25px);">Le constructeur automobile Subaru est un géant du</span>
<span class="tx" style="transform:scaleX(1.1514);left:112.00px;top:305.57px;font-size:5px;font-weight:400;color:#a3a3a3;font-family:'Liberation Sans',sans-serif;-webkit-text-stroke:0.2px currentColor;-webkit-text-stroke:0;filter:blur(0.25px);">développement durable. En 2008, une usine</span>
<span class="tx" style="transform:scaleX(1.0437);left:112.00px;top:312.37px;font-size:5px;font-weight:400;color:#a3a3a3;font-family:'Liberation Sans',sans-serif;-webkit-text-stroke:0.2px currentColor;-webkit-text-stroke:0;filter:blur(0.25px);">d&#x27;assemblage Subaru à Lafayette est devenue le</span>
<span class="tx" style="transform:scaleX(1.1078);left:112.00px;top:319.17px;font-size:5px;font-weight:400;color:#a3a3a3;font-family:'Liberation Sans',sans-serif;-webkit-text-stroke:0.2px currentColor;-webkit-text-stroke:0;filter:blur(0.25px);">premier constructeur automobile à atteindre le</span>
<span class="tx" style="transform:scaleX(1.0659);left:112.00px;top:325.97px;font-size:5px;font-weight:400;color:#a3a3a3;font-family:'Liberation Sans',sans-serif;-webkit-text-stroke:0.2px currentColor;-webkit-text-stroke:0;filter:blur(0.25px);">statut de zéro décharge lorsque l&#x27;usine a mis en</span>
<span class="tx" style="transform:scaleX(0.9102);left:112.00px;top:332.77px;font-size:5px;font-weight:400;color:#a3a3a3;font-family:'Liberation Sans',sans-serif;-webkit-text-stroke:0.2px currentColor;-webkit-text-stroke:0;filter:blur(0.25px);">oeuvre des politiques durables.</span>
<svg style="left:246.4px;top:252px;filter:blur(0.45px)" width="64" height="43.3" viewBox="0 0 64 43.3"><defs><linearGradient id="w1" x1="0" y1="0" x2="0" y2="1"><stop offset="0" stop-color="#a9d0ea"/><stop offset=".45" stop-color="#5f9cc0"/><stop offset=".7" stop-color="#9aa89a"/><stop offset="1" stop-color="#c8c8c0"/></linearGradient></defs><rect width="64" height="43.3" fill="#243246"/><path d="M16 12L64 4V35L28 32z" fill="url(#w1)"/><path d="M30 18l34-6v10l-30 5z" fill="#d8e6ee" opacity=".55"/><path d="M40 16l24-4v12l-20 2z" fill="#8a9a78" opacity=".8"/><path d="M34 22l10-2 6 4-10 2z" fill="#e8eef2" opacity=".8"/><path d="M0 12L7 9l12 23-7 3H0z" fill="#9cbdd6"/><path d="M0 0H64V6L18 13 0 20z" fill="#222a36"/><path d="M10 10l18 24" stroke="#151c26" stroke-width="4"/><path d="M0 33L20 29l44 6V43.3H0z" fill="#2b3a4e"/><path d="M26 32l38 5" stroke="#506a88" stroke-width="1.5"/><ellipse cx="7" cy="36" rx="7" ry="8" fill="none" stroke="#1c2430" stroke-width="1.8"/><circle cx="31" cy="15" r="2" fill="#2a3240"/></svg>
<svg style="left:246.4px;top:300px;filter:blur(0.45px)" width="64" height="44" viewBox="0 0 64 44"><defs><linearGradient id="w2" x1="0" y1="0" x2="1" y2="1"><stop offset="0" stop-color="#7fb8e2"/><stop offset=".5" stop-color="#cfe3ef"/><stop offset="1" stop-color="#3f8cc8"/></linearGradient></defs><rect width="64" height="44" fill="url(#w2)"/><rect x="0" y="0" width="64" height="44" fill="#4a9ad6" opacity=".35"/><ellipse cx="12" cy="14" rx="14" ry="7" fill="#f2f6f8" opacity=".85"/><ellipse cx="20" cy="24" rx="16" ry="6" fill="#e8f0f4" opacity=".8"/><ellipse cx="26" cy="6" rx="6" ry="3" fill="#f4f8fa" opacity=".8"/><path d="M0 32q10-5 20-2l4 14H0z" fill="#5f8a4a"/><path d="M29 11h8l3 20h-14z" fill="#4b3c36"/><rect x="30" y="10" width="7" height="2" fill="#3a2e2a"/><path d="M33 13l11 16" stroke="#4b3c36" stroke-width="1.8"/><rect x="52" y="15" width="2.6" height="24" fill="#6a5048"/><path d="M14 35l6-5h36l8 4v10H14z" fill="#3e3834"/><rect x="44" y="30" width="6" height="10" fill="#7a8a96"/><rect x="0" y="38" width="64" height="6" fill="#4a5a48"/></svg>
<div class="a" style="left:35px;top:370px;width:291px;height:166px;background:#fff;border-radius:4px"></div>
<div class="a" style="left:36px;top:371.6px;width:961px;height:538px;background:#fff;overflow:hidden;transform:scale(0.3005,0.3013);transform-origin:0 0"><svg style="left:380px;top:36px" width="40" height="40"><circle cx="17.1" cy="17.7" r="12.8" fill="none" stroke="#8fd0f7" stroke-width="3.2"/><circle cx="17.1" cy="17.7" r="6.3" fill="none" stroke="#71c1f3" stroke-width="2.6"/><path transform="translate(17.6 19.5) rotate(-25) scale(0.85)" d="M-1.7 1.5a1.7 1.7 0 0 1 3.4 0V8a1.6 1.6 0 0 1 3.2 .2a1.6 1.6 0 0 1 3.2 .4a1.5 1.5 0 0 1 3 .6V14q0 3.5-2.5 5.5H-.5L-6 12.5a1.5 1.5 0 0 1 2.2-2L-1.7 12z" fill="#f7e8d6" stroke="#4a3a2c" stroke-width=".8"/></svg>
<span class="tx" style="transform:scaleX(1.0213);left:421.60px;top:41.45px;font-size:29px;font-weight:400;color:#2f3441;font-family:'Liberation Sans',sans-serif;">Interaction</span>
<span class="tx" style="transform:scaleX(0.9880);left:240.00px;top:94.12px;font-size:22.3px;font-weight:400;color:#3a3f4b;font-family:'Liberation Sans',sans-serif;">Cliquez sur <b>Interaction</b> pour modifier l&#39;interaction</span>
<div class="a" style="left:170px;top:147px;width:621px;height:349.3px;background:#f6f6f6;box-shadow:1.5px 2px 5px rgba(0,0,0,0.2),-1px 0 3px rgba(0,0,0,0.08)"></div>
<div class="a" style="left:170px;top:147px;width:621px;height:22.5px;background:#1b8fa9"></div>
<span class="tx" style="transform:scaleX(1.1229);left:179.20px;top:154.08px;font-size:9px;font-weight:700;color:#ffffff;font-family:'Liberation Sans',sans-serif;">Les trois piliers essentiels à la démarche du développement durable</span>
<div class="a" style="left:180px;top:178.6px;width:269px;height:300px;background:#fff;box-shadow:0 1px 3px rgba(0,0,0,0.12)"></div>
<div class="a" style="left:180px;top:178.6px;width:269px;height:3.2px;background:#f79b5d"></div>
<span class="tx" style="transform:scaleX(0.9595);left:199.20px;top:200.90px;font-size:15px;font-weight:700;color:#3b3b3b;font-family:'Liberation Sans',sans-serif;">Social</span>
<span class="tx" style="transform:scaleX(0.9990);left:199.00px;top:226.47px;font-size:9.6px;font-weight:400;color:#6a6a6a;font-family:'Liberation Sans',sans-serif;"><b style="color:#4a4a4a">Le premier pilier du développement durable est</b></span>
<span class="tx" style="transform:scaleX(0.9848);left:199.00px;top:240.11px;font-size:9.6px;font-weight:400;color:#6a6a6a;font-family:'Liberation Sans',sans-serif;"><b style="color:#4a4a4a">social</b>. Globalement, il s’agit de lutter contre les</span>
<span class="tx" style="transform:scaleX(0.9802);left:199.00px;top:253.75px;font-size:9.6px;font-weight:400;color:#6a6a6a;font-family:'Liberation Sans',sans-serif;">inégalités sociales et, plus globalement, des</span>
<span class="tx" style="transform:scaleX(0.9821);left:199.00px;top:267.39px;font-size:9.6px;font-weight:400;color:#6a6a6a;font-family:'Liberation Sans',sans-serif;">conséquences sociales du développement des</span>
<span class="tx" style="transform:scaleX(0.9760);left:199.00px;top:281.03px;font-size:9.6px;font-weight:400;color:#6a6a6a;font-family:'Liberation Sans',sans-serif;">sociétés humaines. Cela passe par un mode de</span>
<span class="tx" style="transform:scaleX(0.9881);left:199.00px;top:294.67px;font-size:9.6px;font-weight:400;color:#6a6a6a;font-family:'Liberation Sans',sans-serif;">développement qui ne se fait pas aux dépens des</span>
<span class="tx" style="transform:scaleX(0.9785);left:199.00px;top:308.31px;font-size:9.6px;font-weight:400;color:#6a6a6a;font-family:'Liberation Sans',sans-serif;">autres, mais <b style="color:#4a4a4a">en collaboration avec eux</b>. Les</span>
<span class="tx" style="transform:scaleX(0.9905);left:199.00px;top:321.95px;font-size:9.6px;font-weight:400;color:#6a6a6a;font-family:'Liberation Sans',sans-serif;">entreprises s’inscrivant dans une <span style="color:#3d7fd8;text-decoration:underline">démarche de</span></span>
<span class="tx" style="transform:scaleX(0.9658);left:199.00px;top:335.59px;font-size:9.6px;font-weight:400;color:#6a6a6a;font-family:'Liberation Sans',sans-serif;"><span style="color:#3d7fd8;text-decoration:underline">Responsabilité Sociale</span> s’engagent, par exemple, à</span>
<span class="tx" style="transform:scaleX(1.0001);left:199.00px;top:349.23px;font-size:9.6px;font-weight:400;color:#6a6a6a;font-family:'Liberation Sans',sans-serif;">limiter l’impact social de leurs activités, à lutter contre</span>
<span class="tx" style="transform:scaleX(0.9910);left:199.00px;top:362.87px;font-size:9.6px;font-weight:400;color:#6a6a6a;font-family:'Liberation Sans',sans-serif;">l’exclusion et la discrimination et à se soucier du bien-</span>
<span class="tx" style="transform:scaleX(0.9750);left:199.00px;top:376.51px;font-size:9.6px;font-weight:400;color:#6a6a6a;font-family:'Liberation Sans',sans-serif;">être des employés. La croissance d’un pays doit aussi</span>
<span class="tx" style="transform:scaleX(0.9603);left:199.00px;top:390.15px;font-size:9.6px;font-weight:400;color:#6a6a6a;font-family:'Liberation Sans',sans-serif;">s’observer <b style="color:#4a4a4a">sous le prisme du progrès social</b>.</span>
<span class="tx" style="transform:scaleX(0.9974);left:199.00px;top:403.79px;font-size:9.6px;font-weight:400;color:#6a6a6a;font-family:'Liberation Sans',sans-serif;">Commencer par observer l’indice de développement</span>
<span class="tx" style="transform:scaleX(1.0189);left:199.00px;top:417.43px;font-size:9.6px;font-weight:400;color:#6a6a6a;font-family:'Liberation Sans',sans-serif;">humain d’un pays plutôt que son produit intérieur</span>
<span class="tx" style="transform:scaleX(1.0079);left:199.00px;top:431.07px;font-size:9.6px;font-weight:400;color:#6a6a6a;font-family:'Liberation Sans',sans-serif;">brut pour évaluer son niveau de développement fait</span>
<span class="tx" style="transform:scaleX(0.9954);left:199.00px;top:444.71px;font-size:9.6px;font-weight:400;color:#6a6a6a;font-family:'Liberation Sans',sans-serif;">partie de cette démarche.</span>
<svg style="left:0;top:0" width="961" height="541"><defs><linearGradient id="gs" x1="0" y1="0" x2="0" y2="1"><stop offset="0" stop-color="#fbb894"/><stop offset="1" stop-color="#fb8241"/></linearGradient><linearGradient id="ge" x1="0" y1="0" x2="0" y2="1"><stop offset="0" stop-color="#f8cd70"/><stop offset="1" stop-color="#fbb23a"/></linearGradient><linearGradient id="gv" x1="0" y1="0" x2="0" y2="1"><stop offset="0" stop-color="#c9d48f"/><stop offset="1" stop-color="#b6c466"/></linearGradient><filter id="bl" x="-100%" y="-500%" width="300%" height="1100%"><feGaussianBlur stdDeviation="8.5"/></filter></defs><ellipse cx="628.5" cy="457.5" rx="80" ry="9.5" fill="#b6b6b6" filter="url(#bl)"/><path d="M544.12 384.73 A99.5 99.5 0 0 1 625.03 232.56 L641.35 259.12 L630.30 286.30 A47.2 47.2 0 0 0 589.42 357.10 L558.96 357.31 Z" fill="url(#gs)" stroke="#f6f6f6" stroke-width="2.2" stroke-linejoin="miter"/><path d="M625.03 232.56 A99.5 99.5 0 0 1 716.35 378.71 L685.19 379.57 L671.18 357.10 A47.2 47.2 0 0 0 630.30 286.30 L641.35 259.12 Z" fill="url(#ge)" stroke="#f6f6f6" stroke-width="2.2"/><path d="M716.35 378.71 A99.5 99.5 0 0 1 544.12 384.73 L558.96 357.31 L589.42 357.10 A47.2 47.2 0 0 0 671.18 357.10 L685.19 379.57 Z" fill="url(#gv)" stroke="#f6f6f6" stroke-width="2.2"/><text x="618" y="267" font-size="14" font-weight="700" fill="#fff" font-family="Liberation Sans">1</text><text x="690.5" y="370.5" font-size="14" font-weight="700" fill="#fff" font-family="Liberation Sans">2</text><text x="563" y="381.5" font-size="14" font-weight="700" fill="#fff" font-family="Liberation Sans">3</text><path id="pe" d="M652.10 267.16 A69 69 0 0 1 695.15 349.86" fill="none"/><path id="ps" d="M560.89 350.12 A70 70 0 0 1 610.38 264.39" fill="none"/><path id="pv" d="M560.07 363.91 A75.5 75.5 0 0 0 696.93 363.91" fill="none"/><text font-size="8.6" font-weight="700" fill="#fff" font-family="Liberation Sans"><textPath href="#pe" startOffset="50%" text-anchor="middle" textLength="46" lengthAdjust="spacingAndGlyphs">Économique</textPath></text><text font-size="8.6" font-weight="700" fill="#fff" font-family="Liberation Sans"><textPath href="#ps" startOffset="50%" text-anchor="middle" textLength="26" lengthAdjust="spacingAndGlyphs">Social</textPath></text><text font-size="8.6" font-weight="700" fill="#fff" font-family="Liberation Sans"><textPath href="#pv" startOffset="50%" text-anchor="middle" textLength="70" lengthAdjust="spacingAndGlyphs">Environnemental</textPath></text></svg></div>
<div class="a" style="left:33.7px;top:368.8px;width:293.3px;height:168.2px;border:2.6px solid #f4b9a0;border-radius:5px"></div>
<div class="a" style="left:35.7px;top:555.3px;width:288.8px;height:163.1px;background:#fff;border-radius:3px"></div>
<div class="a" style="left:36px;top:739px;width:288.7px;height:60px;background:#fff;border-radius:3px;overflow:hidden"><div class="a" style="left:50.5px;top:44.5px;width:187px;height:20px;background:linear-gradient(180deg,#5b8c9c,#8fb0b8)"></div><div class="a" style="left:85px;top:48px;width:26px;height:14px;border-radius:50%;background:#c9d4d8;opacity:.7"></div><div class="a" style="left:205px;top:50px;width:27px;height:2px;background:#d4e84a"></div><div class="a" style="left:204px;top:48.5px;width:5px;height:5px;border-radius:50%;background:#f0a030"></div></div>
<svg style="left:152px;top:750px" width="13" height="11"><rect x="3" y="0.8" width="9" height="7" rx="1" fill="#dbeaf8" stroke="#4a90d9" stroke-width="1"/><path d="M1 5h4v4H2z" fill="#f5b27a"/></svg>
<span class="tx" style="transform:scaleX(0.8940);left:165.80px;top:751.43px;font-size:10px;font-weight:400;color:#3d3d3d;font-family:'Liberation Sans',sans-serif;-webkit-text-stroke:0.2px currentColor;-webkit-text-stroke:0;">Dialogue</span>
<span class="tx" style="transform:scaleX(1.0537);left:104.00px;top:767.67px;font-size:6.3px;font-weight:400;color:#6a6a6a;font-family:'Liberation Sans',sans-serif;-webkit-text-stroke:0.2px currentColor;-webkit-text-stroke:0;">Cliquer sur le bouton <b>Dialogue</b> pour éditer cet objet</span>
<div class="a" style="left:0;top:794px;width:1536px;height:24px;background:#353435"></div>
<div class="a" style="left:0;top:816.5px;width:1536px;height:1.5px;background:#3a2828"></div>
<span class="tx" style="transform:scaleX(0.9605);left:8.10px;top:800.69px;font-size:11px;font-weight:400;color:#e3e3e3;font-family:'Liberation Sans',sans-serif;-webkit-text-stroke:0.2px currentColor;">Diapositive 6 de 9</span>
<svg style="left:110px;top:797px" width="17" height="17" fill="none" stroke="#dcdcdc" stroke-width="1.1"><path d="M1.5 2.5h6v11h-6z M7.5 2.5h6v5"/><path d="M9 10l5 5M14 10l-5 5"/></svg>
<span class="tx" style="transform:scaleX(0.8917);left:142.30px;top:800.69px;font-size:11px;font-weight:400;color:#e3e3e3;font-family:'Liberation Sans',sans-serif;-webkit-text-stroke:0.2px currentColor;">Français (France)</span>
<svg style="left:236px;top:797px" width="17" height="17" fill="none" stroke="#dcdcdc" stroke-width="1.1"><circle cx="7" cy="2.5" r="1.6"/><path d="M1.5 5.5l5.5 1.5 5.5-1.5M7 7v3l-3 5M7 10l2 2"/><path d="M10 11l5 5M15 11l-5 5"/></svg>
<span class="tx" style="transform:scaleX(0.9444);left:254.60px;top:800.69px;font-size:11px;font-weight:400;color:#e3e3e3;font-family:'Liberation Sans',sans-serif;-webkit-text-stroke:0.2px currentColor;">Accessibilité : consultez nos recommandations</span>
<svg style="left:1111px;top:797px" width="18" height="16" fill="none" stroke="#dcdcdc" stroke-width="1.1"><path d="M5 4l3.5-3 3.5 3"/><path d="M1 7.5h16M1 10.5h16M1 13.5h16"/></svg>
<span class="tx" style="transform:scaleX(0.9774);left:1129.20px;top:799.69px;font-size:11px;font-weight:400;color:#e3e3e3;font-family:'Liberation Sans',sans-serif;-webkit-text-stroke:0.2px currentColor;">Notes</span>
<div class="a" style="left:1176.6px;top:794px;width:40px;height:24px;background:#444"></div>
<svg style="left:1189px;top:797.5px" width="16" height="15" fill="none" stroke="#e0e0e0" stroke-width="1.1"><rect x="0.8" y="0.8" width="14" height="12.5"/><rect x="4" y="3" width="8.5" height="6.5"/><path d="M3 1v12.5"/></svg>
<svg style="left:1228.5px;top:797.5px" width="16" height="15" fill="none" stroke="#e0e0e0" stroke-width="1.1"><rect x="0.8" y="0.8" width="6" height="5"/><rect x="9" y="0.8" width="6" height="5"/><rect x="0.8" y="8.5" width="6" height="5"/><rect x="9" y="8.5" width="6" height="5"/></svg>
<svg style="left:1269px;top:797.5px" width="15" height="15" fill="none" stroke="#e0e0e0" stroke-width="1.1"><path d="M0.8 1.5h5.5l1.2 1 1.2-1h5.5v11.5H8.7l-1.2 1-1.2-1H0.8z M7.5 2.5v11"/><path d="M2.5 5h3M2.5 8h3M9.5 5h3M9.5 8h3"/></svg>
<svg style="left:1308.5px;top:797.5px" width="15" height="16" fill="none" stroke="#e0e0e0" stroke-width="1.1"><path d="M0.5 1h14M1.5 1v7.5h12V1M7.5 8.5v5M4 14.5h7"/><path d="M5.5 3.5h4v3h-4z"/></svg>
<div class="a" style="left:1342.7px;top:804.5px;width:7px;height:1.1px;background:#dcdcdc"></div>
<div class="a" style="left:1355px;top:805px;width:100px;height:1px;background:#bdbdbd"></div>
<div class="a" style="left:1390px;top:799px;width:4.5px;height:12px;background:#cfcfcf"></div>
<div class="a" style="left:1405px;top:802px;width:1px;height:6px;background:#bdbdbd"></div>
<svg style="left:1459.5px;top:800px" width="10" height="10" stroke="#dcdcdc" stroke-width="1.1"><path d="M0.5 5h8.5M4.7 0.8v8.5"/></svg>
<span class="tx" style="transform:scaleX(0.9012);left:1480.40px;top:800.19px;font-size:11px;font-weight:400;color:#e3e3e3;font-family:'Liberation Sans',sans-serif;-webkit-text-stroke:0.2px currentColor;">75 %</span>
<svg style="left:1515px;top:796px" width="17" height="18" fill="none" stroke="#dcdcdc" stroke-width="1.1"><rect x="5" y="5.5" width="7" height="7"/><path d="M8.5 1L6.5 3h4zM8.5 17l-2-2h4zM1 9l2-2v4zM16 9l-2-2v4z" fill="#dcdcdc"/></svg>
<div class="a" style="left:256px;top:177px;width:265px;height:70px;background:#f0f0f0;border:1px solid #d2d2d2;border-radius:4px;box-shadow:1px 3px 7px rgba(0,0,0,0.28)"></div>
<span class="tx" style="transform:scaleX(0.9623);left:267.00px;top:186.22px;font-size:12.5px;font-weight:700;color:#1e1e1e;font-family:'Liberation Sans',sans-serif;-webkit-text-stroke:0.2px currentColor;-webkit-text-stroke:0.1px currentColor;">Interaction</span>
<span class="tx" style="transform:scaleX(0.9536);left:267.00px;top:208.22px;font-size:12.5px;font-weight:400;color:#3c3c3c;font-family:'Liberation Sans',sans-serif;-webkit-text-stroke:0.2px currentColor;-webkit-text-stroke:0;">Insérer une interaction dans la diapositive</span>
<span class="tx" style="transform:scaleX(0.9646);left:267.00px;top:224.02px;font-size:12.5px;font-weight:400;color:#3c3c3c;font-family:'Liberation Sans',sans-serif;-webkit-text-stroke:0.2px currentColor;-webkit-text-stroke:0;">active</span></body></html>
